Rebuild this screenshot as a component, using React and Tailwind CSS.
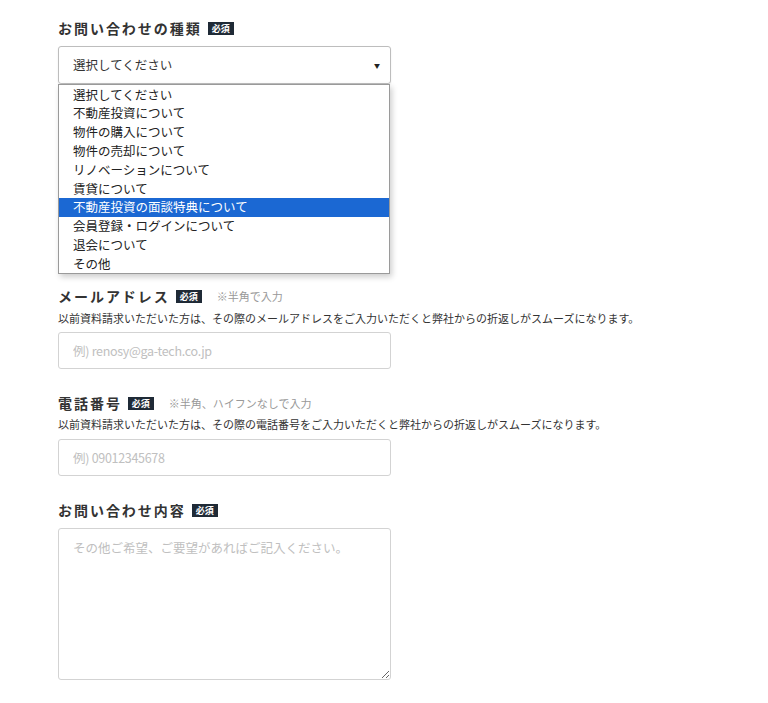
import React from "react";

const options = [
  "選択してください",
  "不動産投資について",
  "物件の購入について",
  "物件の売却について",
  "リノベーションについて",
  "賃貸について",
  "不動産投資の面談特典について",
  "会員登録・ログインについて",
  "退会について",
  "その他",
];

const Badge = () => (
  <span className="ml-[6px] inline-flex h-[13px] items-center bg-[#1f2a36] px-[4px] text-[9px] font-bold leading-none tracking-normal text-white">
    必須
  </span>
);

const Label = ({ children, note }) => (
  <div className="flex h-5 items-center">
    <span className="text-[14px] font-bold tracking-[0.14em] text-[#333]">{children}</span>
    <Badge />
    {note && <span className="ml-[15px] text-[11px] text-[#999]">{note}</span>}
  </div>
);

const App = () => {
  const selectedIndex = 6;

  return (
    <div
      className="min-h-screen bg-white pl-[58px] pt-[18px] text-[#333]"
      style={{ fontFamily: '"Noto Sans CJK JP", "Noto Sans", sans-serif' }}
    >
      <div className="w-[333px]">
        <Label>お問い合わせの種類</Label>
        <div className="relative mt-2">
          <div className="flex h-[38px] items-center justify-between rounded-[3px] border border-[#bdbdbd] pl-[14px] pr-[10px] text-[12.5px] text-[#333] shadow-[0_1px_2px_rgba(0,0,0,0.08)]">
            <span>選択してください</span>
            <span className="text-[6px] text-[#222]">▼</span>
          </div>
          <ul className="absolute left-0 top-[38px] z-10 w-[332px] border border-[#9a9a9a] bg-white shadow-[2px_3px_6px_rgba(0,0,0,0.2)]">
            {options.map((option, i) => (
              <li
                key={option}
                className={
                  "flex h-[18.8px] items-center pl-[14px] pt-[1px] text-[12.5px] " +
                  (i === selectedIndex ? "bg-[#1b68d3] text-white" : "text-[#222]")
                }
              >
                {option}
              </li>
            ))}
          </ul>
        </div>
      </div>

      <div className="h-[202px]" />

      <div>
        <Label note="※半角で入力">メールアドレス</Label>
        <p className="mt-[4px] h-4 text-[11px] leading-4 text-[#333]">
          以前資料請求いただいた方は、その際のメールアドレスをご入力いただくと弊社からの折返しがスムーズになります。
        </p>
        <input
          type="text"
          placeholder="例) renosy@ga-tech.co.jp"
          className="mt-[6px] block h-[37px] w-[333px] rounded-[3px] border border-[#d3d3d3] px-[14px] text-[12.5px] tracking-[-0.3px] outline-none placeholder:text-[#c0c0c0]"
        />
      </div>

      <div className="mt-6">
        <Label note="※半角、ハイフンなしで入力">電話番号</Label>
        <p className="mt-[3px] h-4 text-[11px] leading-4 text-[#333]">
          以前資料請求いただいた方は、その際の電話番号をご入力いただくと弊社からの折返しがスムーズになります。
        </p>
        <input
          type="text"
          placeholder="例) 09012345678"
          className="mt-[7px] block h-[37px] w-[333px] rounded-[3px] border border-[#d3d3d3] px-[14px] text-[12.5px] tracking-[-0.3px] outline-none placeholder:text-[#c0c0c0]"
        />
      </div>

      <div className="mt-6">
        <Label>お問い合わせ内容</Label>
        <textarea
          placeholder="その他ご希望、ご要望があればご記入ください。"
          className="mt-2 block h-[152px] w-[333px] rounded-[3px] border border-[#d3d3d3] px-[14px] py-[10px] text-[12.5px] outline-none placeholder:text-[#c0c0c0]"
        />
      </div>
    </div>
  );
};

export default App;
